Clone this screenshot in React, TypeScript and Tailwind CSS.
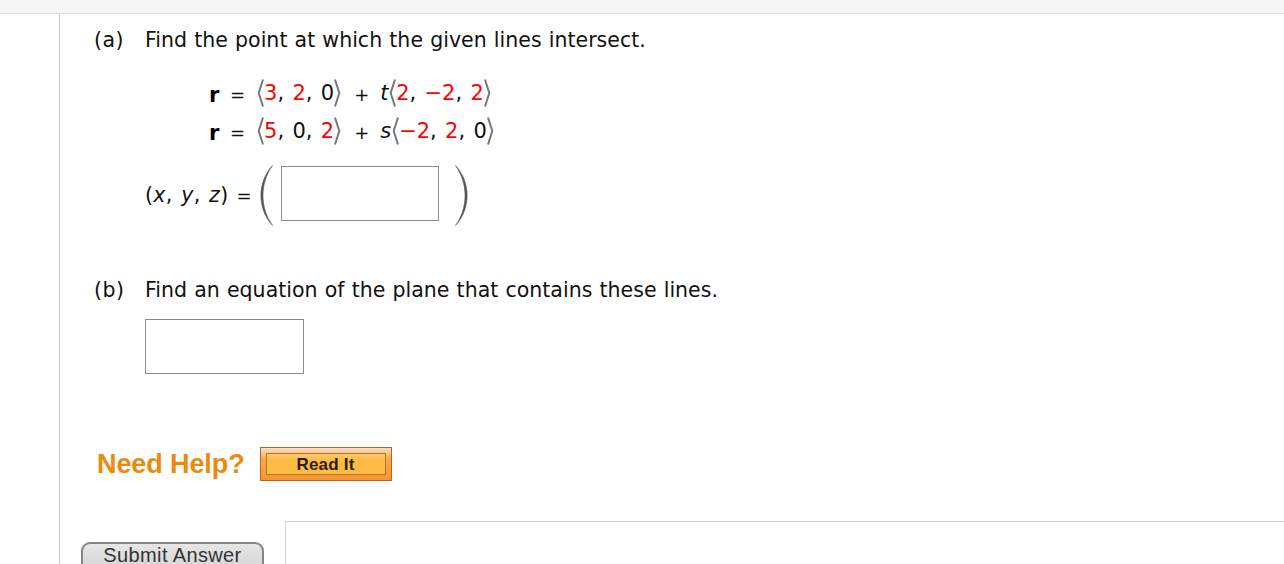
import React from 'react';

type Term = { text: string; red?: boolean };

const lines: { id: string; point: Term[]; param: string; direction: Term[] }[] = [
  {
    id: 'first',
    point: [{ text: '3', red: true }, { text: '2', red: true }, { text: '0' }],
    param: 't',
    direction: [{ text: '2', red: true }, { text: '−2', red: true }, { text: '2', red: true }],
  },
  {
    id: 'second',
    point: [{ text: '5', red: true }, { text: '0' }, { text: '2', red: true }],
    param: 's',
    direction: [{ text: '−2', red: true }, { text: '2', red: true }, { text: '0' }],
  },
];

const Angle: React.FC<{ flip?: boolean }> = ({ flip }) => (
  <svg width="7" height="28" viewBox="0 0 7 28" className="shrink-0" fill="none" stroke="#777" strokeWidth="2">
    <path d={flip ? 'M1 0.5L5.3 14L1 27.5' : 'M6 0.5L1.7 14L6 27.5'} />
  </svg>
);

const Paren: React.FC<{ flip?: boolean }> = ({ flip }) => (
  <svg width="13" height="61" viewBox="0 0 13 61" className="shrink-0" fill="#555">
    <path
      d={flip ? 'M0.5 0.5C16 17 16 44 0.5 60.5C13.2 43 13.2 18 0.5 0.5Z' : 'M12.5 0.5C-3 17 -3 44 12.5 60.5C-0.2 43 -0.2 18 12.5 0.5Z'}
      stroke="#555"
      strokeWidth="0.6"
    />
  </svg>
);

const Vector: React.FC<{ terms: Term[] }> = ({ terms }) => (
  <span className="flex items-center">
    <Angle />
    <span className="flex">
      {terms.map((term, i) => (
        <span key={i} className="flex">
          <span className={term.red ? 'text-[#ff0000]' : ''}>{term.text}</span>
          {i < terms.length - 1 && <span className="w-[15px]">,</span>}
        </span>
      ))}
    </span>
    <Angle flip />
  </span>
);

const Part: React.FC<{ label: string; children: React.ReactNode }> = ({ label, children }) => (
  <div className="flex h-[26px] items-center text-[20.5px] whitespace-nowrap">
    <span className="w-[51px] tracking-[0.5px]">{label}</span>
    <span className="tracking-[0.02px] [word-spacing:0.6px]">{children}</span>
  </div>
);

const App: React.FC = () => {
  return (
    <div className="flex h-[564px] w-[1284px] flex-col overflow-hidden bg-white font-['DejaVu_Sans',sans-serif] text-[21px] leading-[26px] text-[#111]">
      <header className="h-[14px] shrink-0 border-b border-[#dcdcdc] bg-[#f6f6f6]" />

      <main className="ml-[59px] flex grow flex-col border-l border-[#cccccc]">
        <section className="pt-[13px] pl-[34px]">
          <Part label="(a)">Find the point at which the given lines intersect.</Part>

          <div className="mt-[21px] ml-[115px]">
            {lines.map((line) => (
              <div key={line.id} className="flex h-[38px] items-center">
                <b className="w-[21px] pt-1 text-black">r</b>
                <span className="w-[27px] pt-1 text-[18px]">=</span>
                <Vector terms={line.point} />
                <span className="w-[39px] pt-1 pl-[13px] text-[18px]">+</span>
                <i className={line.param === 't' ? 'w-[9px]' : 'w-[12px]'}>{line.param}</i>
                <Vector terms={line.direction} />
              </div>
            ))}
          </div>

          <div className="ml-[51px] flex h-[90px] items-center">
            <span className="w-[115px] whitespace-nowrap">
              <span className="text-[20.5px] tracking-[0.3px] [word-spacing:1.8px]">
                (<i>x</i>, <i>y</i>, <i>z</i>)
              </span>
              <span className="ml-[8px] text-[18px]">=</span>
            </span>
            <Paren />
            <input className="mb-[4px] ml-[8px] h-[55px] w-[158px] border border-[#8c8c8c] bg-white px-2" />
            <span className="ml-[16px]">
              <Paren flip />
            </span>
          </div>
        </section>

        <section className="pt-[37px] pl-[34px]">
          <Part label="(b)">Find an equation of the plane that contains these lines.</Part>
          <input className="mt-[16px] ml-[51px] block h-[55px] w-[159px] border border-[#8c8c8c] bg-white px-2" />
        </section>

        <div className="mt-[73px] flex h-[34px] items-center pl-[37px] font-['Liberation_Sans',Arial,sans-serif] font-bold">
          <span className="w-[163px] text-[27px] tracking-[-0.1px] whitespace-nowrap text-[#ec8a10]">Need Help?</span>
          <button className="h-[34px] w-[132px] border border-[#b5651d] bg-linear-to-b from-[#fde0c4] via-[#f9a54a] via-35% to-[#f7962f] p-[5px]">
            <span className="flex h-full items-center justify-center border border-[#b07a2c] bg-linear-to-b from-[#fcca70] via-[#fcbb45] via-30% to-[#fcbb45] pt-[2px] pr-[1px] text-[17px] tracking-[0.2px] text-[#2b1d05]">
              Read It
            </span>
          </button>
        </div>

        <div className="mt-[40px] flex grow">
          <div className="w-[225px] pt-[21px] pl-[21px]">
            <button className="flex h-[34px] w-[183px] items-start justify-center rounded-[9px] border-2 border-[#858585] bg-linear-to-b from-[#e6e6e6] to-[#d2d2d2] font-['Liberation_Sans',Arial,sans-serif] text-[20px] leading-[23px] tracking-[0.38px] text-[#333]">
              Submit Answer
            </button>
          </div>
          <div className="grow border-t border-l border-[#d4d4d4]" />
        </div>
      </main>
    </div>
  );
};

export default App;
